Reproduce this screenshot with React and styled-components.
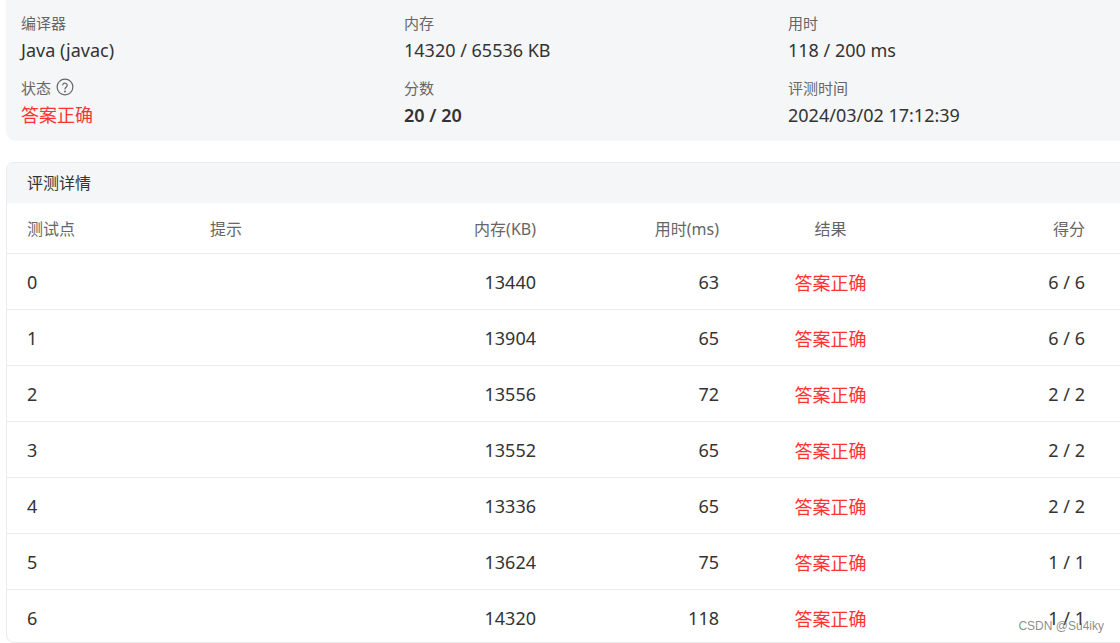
import React from "react";
import styled, { createGlobalStyle } from "styled-components";

const GlobalStyle = createGlobalStyle`
  html, body {
    margin: 0;
    padding: 0;
    background: #ffffff;
    overflow: hidden;
  }
  body {
    font-family: "Noto Sans", "Noto Sans CJK SC", sans-serif;
    color: #333;
  }
`;

const summary = [
  { label: "编译器", value: "Java (javac)" },
  { label: "内存", value: "14320 / 65536 KB" },
  { label: "用时", value: "118 / 200 ms" },
  { label: "状态", value: "答案正确", tone: "ok", help: true },
  { label: "分数", value: "20 / 20", bold: true },
  { label: "评测时间", value: "2024/03/02 17:12:39" },
];

const cases = [
  { id: 0, mem: 13440, time: 63, score: "6 / 6" },
  { id: 1, mem: 13904, time: 65, score: "6 / 6" },
  { id: 2, mem: 13556, time: 72, score: "2 / 2" },
  { id: 3, mem: 13552, time: 65, score: "2 / 2" },
  { id: 4, mem: 13336, time: 65, score: "2 / 2" },
  { id: 5, mem: 13624, time: 75, score: "1 / 1" },
  { id: 6, mem: 14320, time: 118, score: "1 / 1" },
];

const HelpIcon = () => (
  <svg width="18" height="18" viewBox="0 0 24 24" fill="none" stroke="#666" strokeWidth="1.6" strokeLinecap="round" strokeLinejoin="round">
    <circle cx="12" cy="12" r="10.5" />
    <path d="M9 9.2a3 3 0 0 1 5.9 0.9c0 2-2.9 2.5-2.9 4.5" />
    <circle cx="12" cy="18" r="0.5" fill="#666" />
  </svg>
);

const App = () => {
  return (
    <Page>
      <GlobalStyle />
      <SummaryCard>
        {summary.map((item) => (
          <Field key={item.label}>
            <Label>
              {item.label}
              {item.help && <HelpIcon />}
            </Label>
            <Value $tone={item.tone} $bold={item.bold}>
              {item.value}
            </Value>
          </Field>
        ))}
      </SummaryCard>

      <DetailCard>
        <CardTitle>评测详情</CardTitle>
        <HeadRow>
          <Cell>测试点</Cell>
          <Cell>提示</Cell>
          <Cell $align="right">内存(KB)</Cell>
          <Cell $align="right">用时(ms)</Cell>
          <Cell $align="center">结果</Cell>
          <Cell $align="right">得分</Cell>
        </HeadRow>
        {cases.map((c) => (
          <BodyRow key={c.id}>
            <Cell>{c.id}</Cell>
            <Cell />
            <Cell $align="right">{c.mem}</Cell>
            <Cell $align="right">{c.time}</Cell>
            <Cell $align="center" $tone="ok">
              答案正确
            </Cell>
            <Cell $align="right">{c.score}</Cell>
          </BodyRow>
        ))}
      </DetailCard>

      <Watermark>CSDN @Su4iky</Watermark>
    </Page>
  );
};

export default App;

const Page = styled.div`
  width: 1220px;
  height: 643px;
  padding-left: 6px;
  display: flex;
  flex-direction: column;
  gap: 21px;
`;

const SummaryCard = styled.div`
  background: #f5f6f7;
  border-radius: 0 0 10px 10px;
  padding: 8px 15px 12px;
  display: grid;
  grid-template-columns: 383px 384px 384px;
  row-gap: 9px;
`;

const Field = styled.div`
  display: flex;
  flex-direction: column;
`;

const Label = styled.div`
  display: flex;
  align-items: center;
  gap: 5px;
  height: 28px;
  font-size: 15px;
  color: #666;
`;

const Value = styled.div`
  height: 28px;
  line-height: 28px;
  font-size: 18px;
  font-weight: ${(p) => (p.$bold ? 600 : 400)};
  color: ${(p) => (p.$tone === "ok" ? "#ff3333" : "#333")};
`;

const DetailCard = styled.div`
  border: 1px solid #ebebeb;
  border-radius: 8px;
  overflow: hidden;
  background: #fff;
`;

const CardTitle = styled.div`
  height: 40px;
  line-height: 40px;
  background: #f5f6f7;
  padding-left: 20px;
  font-size: 16px;
  color: #333;
`;

const HeadRow = styled.div`
  display: grid;
  grid-template-columns: repeat(6, 183px) 1fr;
  height: 50px;
  align-items: center;
  font-size: 16px;
  color: #666;
`;

const BodyRow = styled.div`
  display: grid;
  grid-template-columns: repeat(6, 183px) 1fr;
  height: 55px;
  align-items: center;
  border-top: 1px solid #ebebeb;
  font-size: 18px;
  color: #333;
`;

const Cell = styled.div`
  padding: 0 20px;
  text-align: ${(p) => p.$align || "left"};
  color: ${(p) => (p.$tone === "ok" ? "#ff3333" : "inherit")};
  white-space: nowrap;
`;

const Watermark = styled.div`
  position: absolute;
  right: 16px;
  top: 619px;
  font-family: "Liberation Sans", sans-serif;
  font-size: 12px;
  color: rgba(120, 120, 120, 0.85);
  pointer-events: none;
`;
